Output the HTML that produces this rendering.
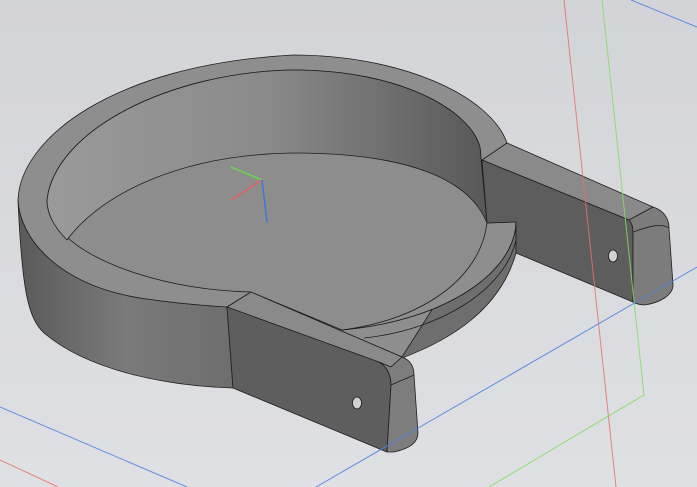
<!DOCTYPE html>
<html><head><meta charset="utf-8"><style>
html,body{margin:0;padding:0;width:697px;height:487px;overflow:hidden;background:#d8d9dd}
svg{display:block}
</style></head><body>
<svg width="697" height="487" viewBox="0 0 697 487" xmlns="http://www.w3.org/2000/svg">
<defs>
<linearGradient id="bg" x1="0" y1="0" x2="0" y2="1"><stop offset="0" stop-color="#d3d4d8"/><stop offset="1" stop-color="#dfe0e3"/></linearGradient>
<linearGradient id="ow" x1="0" y1="0" x2="1" y2="0"><stop offset="0" stop-color="#5a5a5a"/><stop offset="0.5" stop-color="#7a7a7a"/><stop offset="1" stop-color="#6e6e6e"/></linearGradient>
<linearGradient id="iw" x1="47" y1="0" x2="487" y2="0" gradientUnits="userSpaceOnUse"><stop offset="0" stop-color="#9a9a9a"/><stop offset="0.5" stop-color="#8a8a8a"/><stop offset="1" stop-color="#585858"/></linearGradient>
</defs>
<rect width="697" height="487" fill="url(#bg)"/>
<path d="M18,200 C20,140 110,65 293,55 C400,55 490,95 507,143 L516,222 L516,253 C500,310 450,340 402,358 L391,367 L227,307 C210,306 180,304 140,298 C60,285 20,240 18,200Z" fill="#8a8a8a"/>
<g stroke="#1e1e1e" stroke-width="0.8" stroke-linejoin="round">
<path d="M18,200 C20,240 60,285 140,298 C180,304 210,306 227,307 L233,388 C170,386 90,372 44,333 C28,318 22,290 18,200 Z" fill="url(#ow)"/>
<path d="M402,358 C450,340 500,310 516,253 L516,222 L400,330 Z" fill="#6e6e6e"/>
<path d="M18,200 C20,140 110,65 293,55 C400,55 490,95 507,143 L482,162 L487,223 L402,357 L251,292 L227,307 C210,306 180,304 140,298 C60,285 20,240 18,200 Z" fill="#8e8e8e"/>
<path d="M47,200 C55,130 170,72 293,70 C400,70 470,110 480,147 L487,223 L516,222 C515,270 450,320 342,330 L251,292 C170,290 90,265 60,230 C50,220 47,210 47,200 Z" fill="#8d8d8d"/>
<path d="M47,200 C55,130 170,72 293,70 C400,70 470,110 480,147 L487,223 C470,180 410,154 300,153 C180,153 100,195 67,240 C55,228 47,215 47,200 Z" fill="url(#iw)"/>
<path d="M487,223 L516,222 C515,270 450,320 342,330 C420,320 480,280 487,223 Z" fill="#8e8e8e"/>
<path d="M516,240 C505,290 440,330 364,338" fill="none"/>
<path d="M507,143 L653,207 L629,220 L482,160 Z" fill="#8a8a8a"/>
<path d="M482,160 L629,220 C632,222 633,228 633,232 L633,302 L516,253 L516,222 L487,223 Z" fill="#5d5d5d"/>
<path d="M629,220 L653,207 C663,210 669,218 669,228 L673,285 C673,295 660,303 644,305 C638,305 633,302 633,302 L633,232 C633,226 631,222 629,220 Z" fill="#7c7c7c"/>
<path d="M633,232 C645,228 660,222 669,228" fill="none"/>
<ellipse cx="613" cy="256" rx="4.5" ry="6" fill="#d0d0d0"/>
<path d="M227,307 L251,292 L402,357 L391,367 Z" fill="#8a8a8a"/>
<path d="M227,307 L379,362 C386,366 391,374 391,385 L387,452 L233,388 Z" fill="#5e5e5e"/>
<path d="M379,362 L391,367 L402,357 C410,360 414,366 414,375 L418,433 C418,443 408,449 394,452 L387,452 L391,385 C391,374 386,366 379,362 Z" fill="#7d7d7d"/>
<path d="M391,385 C400,381 410,377 414,375" fill="none"/>
<ellipse cx="357" cy="403" rx="4.5" ry="6" fill="#d0d0d0"/>
</g>
<g stroke-width="1" fill="none" opacity="0.85">
<line x1="564" y1="0" x2="616" y2="487" stroke="#e87070"/>
<polyline points="602,0 644,395 489,487" stroke="#80e060"/>
<line x1="631" y1="0" x2="697" y2="27" stroke="#4a7fe0"/>
<line x1="0" y1="407" x2="187" y2="487" stroke="#4a7fe0"/>
<line x1="316" y1="487" x2="697" y2="267" stroke="#4a7fe0"/>
<line x1="0" y1="460" x2="58" y2="487" stroke="#e87070"/>
</g>
<g stroke-width="1.5">
<line x1="262" y1="180" x2="231" y2="167" stroke="#6ad84a"/>
<line x1="262" y1="180" x2="231" y2="200" stroke="#e06060"/>
<line x1="262" y1="180" x2="267" y2="222" stroke="#3a7ad8"/>
</g>
</svg>
</body></html>
